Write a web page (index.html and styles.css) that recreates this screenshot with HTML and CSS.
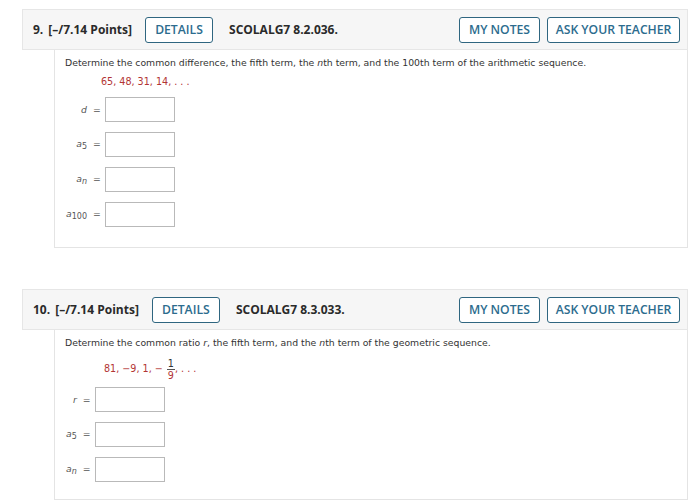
FILE: index.html
```html
<!DOCTYPE html>
<html>
<head>
<meta charset="utf-8">
<link rel="stylesheet" href="styles.css">
</head>
<body>
<div class="page">
  <section class="question q9">
    <div class="qhead">
      <span class="qnum">9.</span>
      <span class="pts">[–/7.14 Points]</span>
      <span class="btn details">DETAILS</span>
      <span class="code">SCOLALG7 8.2.036.</span>
      <span class="spacer"></span>
      <span class="btn notes">MY NOTES</span>
      <span class="btn ask">ASK YOUR TEACHER</span>
    </div>
    <div class="qbody">
      <p class="prompt">Determine the common difference, the fifth term, the <i>n</i>th term, and the 100th term of the arithmetic sequence.</p>
      <p class="seq">65, 48, 31, 14, . . .</p>
      <div class="answers">
        <span class="lbl"><i>d</i> &nbsp;=</span><span class="box"></span>
        <span class="lbl"><i>a</i><sub>5</sub> &nbsp;=</span><span class="box"></span>
        <span class="lbl"><i>a</i><sub><i>n</i></sub> &nbsp;=</span><span class="box"></span>
        <span class="lbl"><i>a</i><sub>100</sub> &nbsp;=</span><span class="box"></span>
      </div>
    </div>
  </section>

  <section class="question q10">
    <div class="qhead">
      <span class="qnum">10.</span>
      <span class="pts">[–/7.14 Points]</span>
      <span class="btn details">DETAILS</span>
      <span class="code">SCOLALG7 8.3.033.</span>
      <span class="spacer"></span>
      <span class="btn notes">MY NOTES</span>
      <span class="btn ask">ASK YOUR TEACHER</span>
    </div>
    <div class="qbody">
      <p class="prompt">Determine the common ratio <i>r</i>, the fifth term, and the <i>n</i>th term of the geometric sequence.</p>
      <p class="seq seq2">81, −9, 1, − <span class="frac"><span class="num">1</span><span class="den">9</span></span>, . . .</p>
      <div class="answers">
        <span class="lbl"><i>r</i> &nbsp;=</span><span class="box"></span>
        <span class="lbl"><i>a</i><sub>5</sub> &nbsp;=</span><span class="box"></span>
        <span class="lbl"><i>a</i><sub><i>n</i></sub> &nbsp;=</span><span class="box"></span>
      </div>
    </div>
  </section>
</div>
</body>
</html>
```

FILE: styles.css
```css
html, body {
  margin: 0;
  padding: 0;
  background: #ffffff;
}

.page {
  padding: 9px 12px 0 22px;
  display: flex;
  flex-direction: column;
  gap: 41px;
}

.question {
  width: 666px;
}

.qhead {
  box-sizing: border-box;
  height: 41px;
  background: #f6f6f6;
  border: 1px solid #e6e6e6;
  display: flex;
  align-items: center;
  padding: 0 7px 0 10px;
  font-family: "Open Sans", "DejaVu Sans", sans-serif;
  font-weight: 700;
  font-size: 12px;
  color: #2a2a2a;
}

.qnum {
  white-space: nowrap;
}

.pts {
  margin-left: 5px;
  white-space: nowrap;
}

.btn {
  box-sizing: border-box;
  height: 26px;
  display: flex;
  align-items: center;
  justify-content: center;
  border: 1.5px solid #2f6680;
  border-radius: 3px;
  background: #fff;
  color: #2c6c8e;
  font-weight: 600;
  font-size: 12.2px;
  padding: 0;
  white-space: nowrap;
}

.details {
  margin-left: 13px;
  width: 68px;
}

.notes {
  width: 81px;
}

.ask {
  width: 133px;
  margin-left: 7px;
}

.code {
  margin-left: 16px;
}

.spacer {
  flex: 1;
}

.qbody {
  box-sizing: border-box;
  margin-left: 32px;
  border: 1px solid #e4e4e4;
  border-top: none;
  background: #fff;
  padding: 6px 0 0 10px;
  font-family: "DejaVu Sans", Verdana, sans-serif;
  font-size: 9.3px;
  color: #333;
}

.q9 .qbody {
  height: 198px;
}

.q10 .qbody {
  height: 170px;
}

.prompt {
  margin: 0;
  line-height: 13px;
}

.seq {
  margin: 7px 0 0 36px;
  color: #b23434;
  line-height: 12px;
  font-size: 9.6px;
}

.seq2 {
  margin: 8px 0 0 39px;
  line-height: 24px;
}

.frac {
  display: inline-flex;
  flex-direction: column;
  align-items: center;
  vertical-align: middle;
  line-height: 11px;
  margin-left: 1px;
}

.num {
  color: #333;
  border-bottom: 1px solid #555;
  padding: 0 1px;
}

.den {
  color: #b23434;
}

.answers {
  display: grid;
  grid-template-columns: auto 70px;
  column-gap: 4px;
  row-gap: 10px;
  margin: 9px 0 0 1px;
  align-items: center;
  justify-items: end;
  width: max-content;
}

.q10 .answers {
  margin-top: 6px;
}

.lbl {
  color: #555;
  font-size: 9.3px;
  white-space: nowrap;
}

.lbl sub {
  font-size: 8px;
  vertical-align: -2px;
}

.box {
  box-sizing: border-box;
  width: 70px;
  height: 25px;
  border: 1px solid #b9b9b9;
  background: #fff;
}
```
